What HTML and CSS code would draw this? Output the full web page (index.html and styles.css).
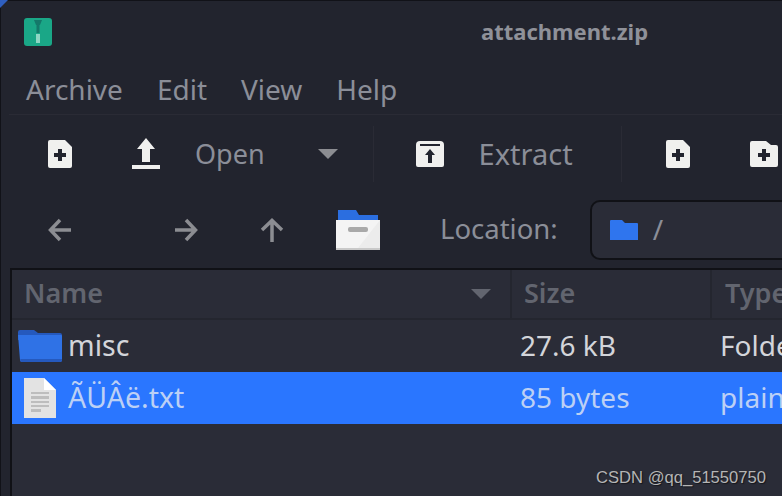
FILE: index.html
```html
<!DOCTYPE html>
<html lang="en">
    <head>
        <meta charset="UTF-8">
        <meta name="viewport" content="width=device-width, initial-scale=1.0">
        <title>attachment.zip</title>
        <link rel="stylesheet" href="styles.css">
    </head>
    <body>
        <div class="corner"></div>
        <div id="window">
            <div class="titlebar">
                <svg class="appicon" width="28" height="28" viewBox="0 0 28 28">
                    <rect width="28" height="28" rx="3" fill="#1aa787"/>
                    <path d="M10 2h8l-2 5h-4z" fill="#14796a"/>
                    <rect x="12.500" y="7" width="3" height="8" fill="#14796a"/>
                    <rect x="12" y="16" width="4" height="9" fill="#8fd6c4"/>
                </svg>
                <div class="title">attachment.zip</div>
            </div>
            <div class="menubar">
                <span>Archive</span>
                <span>Edit</span>
                <span>View</span>
                <span>Help</span>
            </div>
            <div class="toolbar">
                <svg class="ic-new" width="24" height="28" viewBox="0 0 24 28">
                    <path d="M2 0h15l7 7v19a2 2 0 0 1-2 2H2a2 2 0 0 1-2-2V2a2 2 0 0 1 2-2z" fill="#f0f0ee"/>
                    <path d="M10 9h4v4h4v4h-4v4h-4v-4H6v-4h4z" fill="#22242e"/>
                </svg>
                <svg class="ic-open" width="28" height="32" viewBox="0 0 28 32">
                    <path d="M14 0l9 11h-5v13h-8V11H5z" fill="#f0f0ee"/>
                    <rect y="27" width="28" height="4" fill="#f0f0ee"/>
                </svg>
                <span class="lbl-open">Open</span>
                <div class="drop"></div>
                <div class="sep sep-a"></div>
                <svg class="ic-extract" width="28" height="26" viewBox="0 0 28 26">
                    <path d="M4 0h20a4 4 0 0 1 4 4v20a2 2 0 0 1-2 2H2a2 2 0 0 1-2-2V4a4 4 0 0 1 4-4z" fill="#f0f0ee"/>
                    <rect x="4" y="3" width="20" height="2" fill="#22242e"/>
                    <path d="M14 8l5 6h-3v8h-4v-8H9z" fill="#22242e"/>
                </svg>
                <span class="lbl-extract">Extract</span>
                <div class="sep sep-b"></div>
                <svg class="ic-new2" width="24" height="28" viewBox="0 0 24 28">
                    <path d="M2 0h15l7 7v19a2 2 0 0 1-2 2H2a2 2 0 0 1-2-2V2a2 2 0 0 1 2-2z" fill="#f0f0ee"/>
                    <path d="M10 9h4v4h4v4h-4v4h-4v-4H6v-4h4z" fill="#22242e"/>
                </svg>
                <svg class="ic-addfolder" width="28" height="26" viewBox="0 0 28 26">
                    <path d="M2 0h14l5 4h5a2 2 0 0 1 2 2v18a2 2 0 0 1-2 2H2a2 2 0 0 1-2-2V2a2 2 0 0 1 2-2z" fill="#f0f0ee"/>
                    <path d="M12 8h4v4h4v4h-4v4h-4v-4H8v-4h4z" fill="#22242e"/>
                </svg>
            </div>
            <div class="locbar">
                <svg class="ic-back" width="24" height="24" viewBox="0 0 24 24">
                    <path d="M23 12H3M12 2L2.500 12 12 22" fill="none" stroke="#8c8d92" stroke-width="3.500"/>
                </svg>
                <svg class="ic-fwd" width="24" height="24" viewBox="0 0 24 24">
                    <path d="M1 12h20M12 2l9.500 10L12 22" fill="none" stroke="#8c8d92" stroke-width="3.500"/>
                </svg>
                <svg class="ic-up" width="24" height="24" viewBox="0 0 24 24">
                    <path d="M12 24V3M2 12l10-9.500L22 12" fill="none" stroke="#8c8d92" stroke-width="3.500"/>
                </svg>
                <svg class="ic-home" width="44" height="40" viewBox="0 0 44 40">
                    <path d="M2 0h18l3 5h19v6H2z" fill="#2b6ee0"/>
                    <rect y="10" width="44" height="30" fill="#f4f4f4"/>
                    <path d="M44 10v28H22z" fill="#ececec"/>
                    <rect y="38" width="44" height="2" fill="#c9c9c9"/>
                    <rect x="12" y="17" width="20" height="5" rx="2" fill="#a9a9a9"/>
                </svg>
                <span class="lbl-loc">Location:</span>
                <div class="entry">
                    <svg width="28" height="20" viewBox="0 0 28 20">
                        <path d="M1 0h11l3 3h12a1 1 0 0 1 1 1v16H0V1a1 1 0 0 1 1-1z" fill="#2f75ee"/>
                    </svg>
                    <span>/</span>
                </div>
            </div>
            <div class="tree">
                <div class="row head">
                    <div class="col col-name"><span>Name</span> <i class="sort"></i></div>
                    <div class="col col-size"><span>Size</span></div>
                    <div class="col col-type"><span>Type</span></div>
                </div>
                <div class="row">
                    <div class="col col-name">
                        <svg class="ic-folder" width="44" height="32" viewBox="0 0 44 32">
                            <path d="M2 0h14l4 3h22a2 2 0 0 1 2 2v5H0V2a2 2 0 0 1 2-2z" fill="#2559bd"/>
                            <path d="M0 5h43a1 1 0 0 1 1 1v24a2 2 0 0 1-2 2H4a2 2 0 0 1-2-2z" fill="#2f72e6"/>
                            <path d="M2.500 29h41.500v1a2 2 0 0 1-2 2H4a2 2 0 0 1-1.500-3z" fill="#2559bd"/>
                        </svg>
                        <span class="fname">misc</span>
                    </div>
                    <div class="col col-size"><span>27.6 kB</span></div>
                    <div class="col col-type"><span>Folder</span></div>
                </div>
                <div class="row selected">
                    <div class="col col-name">
                        <svg class="ic-doc" width="32" height="40" viewBox="0 0 32 40">
                            <path d="M0 0h20l12 12v28H0z" fill="#e3e3e3"/>
                            <path d="M20 0l12 12H20z" fill="#fff"/>
                            <path d="M7 14h18v2H7zM7 18h18v3H7zM7 23h18v2H7zM7 27h18v2H7zM7 31h10v3H7z" fill="#bdbdbd"/>
                        </svg>
                        <span class="fname">ÃÜÂë.txt</span>
                    </div>
                    <div class="col col-size"><span>85 bytes</span></div>
                    <div class="col col-type"><span>plain text</span></div>
                </div>
            </div>
        </div>
        <div class="watermark">CSDN @qq_51550750</div>
    </body>
</html>
```

FILE: styles.css
```css
*{
    padding: 0;
    margin: 0;
    box-sizing: border-box;
}
html, body{width: 782px; height: 496px; overflow: hidden; background: #16171d;}
#window{
    width: 782px;
    height: 496px;
    padding: 2px 0 0 2px;
    background-color: #22242e;
    border-top: 1px solid #111218;
    border-left: 1px solid #111218;
    display: flex;
    flex-direction: column;
    font-family: "Noto Sans", sans-serif;
    font-size: 28px;
    color: #8b8e98;
    white-space: nowrap;
}
.corner{position: absolute; left: 0; top: 0; width: 8px; height: 8px; background: #2f5fc0; z-index: 2; clip-path: polygon(0 0, 100% 0, 0 100%);}

.titlebar{height: 54px; position: relative; flex: none; display: flex; align-items: center; padding-left: 21px;}
.appicon{margin-top: 3px;}
.title{position: absolute; left: 478px; top: 13px; font-size: 22px; font-weight: 700; line-height: 30px; color: #8f9199;}

.menubar{height: 58px; flex: none; display: flex; align-items: center; gap: 34px; padding-top: 7px; padding-left: 17px; margin-left: 6px; border-bottom: 1px solid #2a2b35;}

.toolbar{height: 77px; flex: none; display: flex; align-items: center;}
.ic-new{margin-left: 45px;}
.ic-open{margin-left: 60px;}
.lbl-open{margin-left: 35px; font-size: 27px;}
.drop{margin-left: 53px; width: 0; height: 0; border: 10px solid transparent; border-top-color: #8c8d92; border-bottom: 0;}
.sep{width: 1px; height: 56px; background: #2a2b35;}
.sep-a{margin-left: 35px;}
.ic-extract{margin-left: 42px;}
.lbl-extract{margin-left: 35px; font-size: 29px;}
.sep-b{margin-left: 48px;}
.ic-new2{margin-left: 44px;}
.ic-addfolder{margin-left: 60px;}

.locbar{height: 76px; flex: none; display: flex; align-items: center;}
.ic-back{margin-left: 45px;}
.ic-fwd{margin-left: 102px;}
.ic-up{margin-left: 62px;}
.ic-home{margin-left: 52px;}
.lbl-loc{margin-left: 60px; margin-bottom: 3px; font-size: 27.500px;}
.entry{margin-left: 32px; flex: 1; height: 60px; margin-right: -40px; display: flex; align-items: center; gap: 15px; padding-left: 18px; background: #2a2c37; border: 2px solid #101116; border-radius: 10px;}
.entry span{margin-bottom: 3px;}

.tree{flex: 1; margin-left: 7px; background-color: #2a2c37; border-top: 2px solid #101116; border-left: 2px solid #101116;}
.row{display: grid; grid-template-columns: 499px 200px 200px; height: 52px; align-items: center; color: #d3d5da;}
.col{display: flex; align-items: center; height: 100%; padding-left: 9px;}
.col span{padding-bottom: 2px;}
.row.head{grid-template-columns: 500px 200px 200px; height: 50px; color: #62656f; font-weight: 600; border-bottom: 2px solid #24262f; font-size: 27px;}
.head .col{border-right: 2px solid #24262f; padding-left: 13px;}
.head .col-name, .head .col-size{padding-left: 12px;}
.head .col span{padding-bottom: 4px;}
.sort{margin-left: auto; margin-right: 19px; width: 0; height: 0; border: 10px solid transparent; border-top-color: #62656f; border-bottom: 0;}
.fname{font-size: 28.500px;}
.ic-folder{margin-left: -3px; margin-right: 6px;}
.ic-doc{margin-left: 3px; margin-right: 12px;}
.selected{background: #2a76ff; color: #bcd0f5;}

.watermark{position: absolute; left: 596px; top: 468px; font-family: "Liberation Sans", sans-serif; font-size: 16.600px; line-height: 20px; color: #b5b5b5; text-shadow: 1px 1px 1px rgba(0,0,0,.5);}
```
